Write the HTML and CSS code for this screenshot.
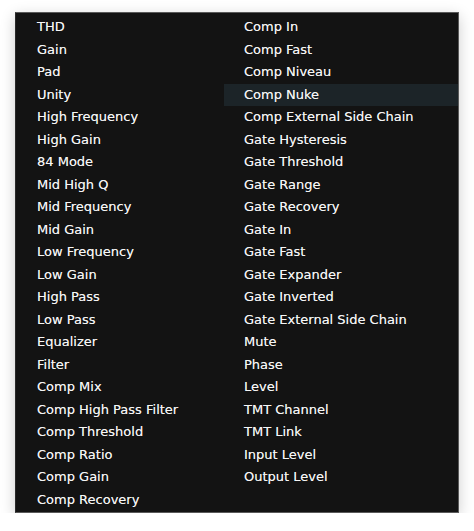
FILE: index.html
```html
<!DOCTYPE html>
<html>
<head>
<meta charset="utf-8">
<link rel="stylesheet" href="styles.css">
</head>
<body>
<div class="menu">
  <ul class="col col-left">
    <li>THD</li>
    <li>Gain</li>
    <li>Pad</li>
    <li>Unity</li>
    <li>High Frequency</li>
    <li>High Gain</li>
    <li>84 Mode</li>
    <li>Mid High Q</li>
    <li>Mid Frequency</li>
    <li>Mid Gain</li>
    <li>Low Frequency</li>
    <li>Low Gain</li>
    <li>High Pass</li>
    <li>Low Pass</li>
    <li>Equalizer</li>
    <li>Filter</li>
    <li>Comp Mix</li>
    <li>Comp High Pass Filter</li>
    <li>Comp Threshold</li>
    <li>Comp Ratio</li>
    <li>Comp Gain</li>
    <li>Comp Recovery</li>
  </ul>
  <ul class="col col-right">
    <li>Comp In</li>
    <li>Comp Fast</li>
    <li>Comp Niveau</li>
    <li class="active">Comp Nuke</li>
    <li>Comp External Side Chain</li>
    <li>Gate Hysteresis</li>
    <li>Gate Threshold</li>
    <li>Gate Range</li>
    <li>Gate Recovery</li>
    <li>Gate In</li>
    <li>Gate Fast</li>
    <li>Gate Expander</li>
    <li>Gate Inverted</li>
    <li>Gate External Side Chain</li>
    <li>Mute</li>
    <li>Phase</li>
    <li>Level</li>
    <li>TMT Channel</li>
    <li>TMT Link</li>
    <li>Input Level</li>
    <li>Output Level</li>
  </ul>
</div>
</body>
</html>
```
FILE: styles.css
```css
html, body {
  margin: 0;
  padding: 0;
  background: #ffffff;
}
body {
  padding: 12px 0 0 15px;
}
.menu {
  box-sizing: border-box;
  width: 444px;
  height: 501px;
  background: #131313;
  border: 1px solid #5a5a5a;
  border-left-color: #2a2a2a;
  box-shadow: 0 4px 14px rgba(0, 0, 0, 0.2);
  display: flex;
  padding-top: 3px;
  font-family: "DejaVu Sans", "Liberation Sans", sans-serif;
  font-size: 13px;
  color: #f6f6f6;
}
.col {
  list-style: none;
  margin: 0;
  padding: 0;
}
.col-left {
  width: 208px;
}
.col-right {
  flex: 1;
}
.col li {
  height: 22.5px;
  line-height: 22.5px;
  white-space: nowrap;
  text-shadow: 0 0 0.4px rgba(255, 255, 255, 0.6);
}
.col-left li {
  padding-left: 21px;
}
.col-right li {
  padding-left: 20px;
}
.col-right li.active {
  background: #1c2428;
}
```
